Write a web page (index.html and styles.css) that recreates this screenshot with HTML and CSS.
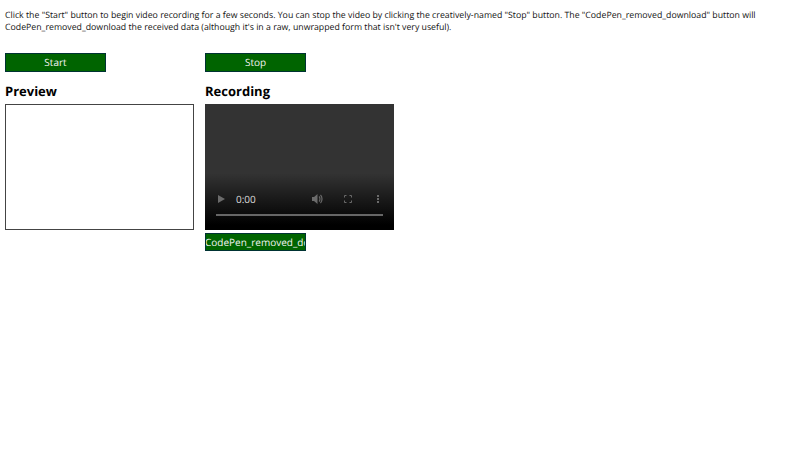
FILE: index.html
```html
<!DOCTYPE html>
<html lang="en">
<head>
    <meta charset="UTF-8">
    <title>Recording</title>
    <link rel="stylesheet" href="styles.css">
</head>
<body>
    <p class="intro">Click the "Start" button to begin video recording for a few seconds. You can stop the video by clicking the creatively-named "Stop" button. The "CodePen_removed_download" button will CodePen_removed_download the received data (although it's in a raw, unwrapped form that isn't very useful).</p>
    <div class="columns">
        <div class="column">
            <div class="button">Start</div>
            <h2>Preview</h2>
            <div class="preview"></div>
        </div>
        <div class="column">
            <div class="button">Stop</div>
            <h2>Recording</h2>
            <div class="recording">
                <div class="controls">
                    <svg class="play" width="7" height="8" viewBox="0 0 7 8"><path d="M0 0L7 4L0 8Z" fill="#6b6b6b"/></svg>
                    <span class="time">0:00</span>
                    <svg class="volume" width="11" height="10" viewBox="0 0 11 10"><path d="M0 3H2L5.500 0V10L2 7H0Z" fill="#6b6b6b"/><path d="M7 2.500C8.300 3.500 8.300 6.500 7 7.500M8.500 1C10.500 3 10.500 7 8.500 9" fill="none" stroke="#6b6b6b" stroke-width="1.200"/></svg>
                    <svg class="fullscreen" width="8" height="8" viewBox="0 0 8 8"><path d="M0.500 2.500V0.500H2.500M5.500 0.500H7.500V2.500M7.500 5.500V7.500H5.500M2.500 7.500H0.500V5.500" fill="none" stroke="#6b6b6b"/></svg>
                    <svg class="menu" width="2" height="8" viewBox="0 0 2 8"><path d="M0 0H2V2H0ZM0 3H2V5H0ZM0 6H2V8H0Z" fill="#6b6b6b"/></svg>
                </div>
                <div class="track"></div>
            </div>
            <a class="button download" href="#">CodePen_removed_download</a>
        </div>
    </div>
</body>
</html>
```

FILE: styles.css
```css
body {
    font-family: "Open Sans", sans-serif;
    font-size: 8.75px;
    line-height: 12px;
    margin: 0;
    padding: 9px 5px 0;
    color: #111;
    background-color: #fff;
    text-rendering: geometricPrecision;
}
.intro {
    margin: 0 0 20px;
    width: 790px;
}
.columns {
    display: flex;
    gap: 11px;
}
.column {
    width: 189px;
}
.button {
    display: block;
    box-sizing: border-box;
    width: 101px;
    height: 19px;
    line-height: 16px;
    font-size: 10px;
    text-align: center;
    color: #f4f4f4;
    background-color: #006400;
    border: 1px solid #033;
    text-decoration: none;
    white-space: nowrap;
    overflow: hidden;
}
.download {
    height: 18px;
    margin-top: 3px;
    text-align: left;
    text-indent: -1px;
}
h2 {
    font-size: 13px;
    line-height: 18px;
    margin: 10px 0 4px;
    color: #000;
}
.preview {
    box-sizing: border-box;
    width: 189px;
    height: 126px;
    border: 1px solid #444;
}
.recording {
    display: flex;
    flex-direction: column;
    justify-content: flex-end;
    box-sizing: border-box;
    width: 189px;
    height: 126px;
    padding: 0 11px 14px;
    background: linear-gradient(#333 0, #333 55%, #000 96%);
}
.controls {
    display: flex;
    align-items: center;
    height: 10px;
    margin-bottom: 10px;
    color: #ddd;
}
.play {
    margin-left: 2px;
}
.time {
    margin-left: 11px;
    font-size: 10px;
}
.volume {
    margin-left: auto;
}
.fullscreen {
    margin-left: 21px;
}
.menu {
    margin-left: 25px;
    margin-right: 4px;
}
.track {
    height: 2px;
    background-color: #666;
}
```
